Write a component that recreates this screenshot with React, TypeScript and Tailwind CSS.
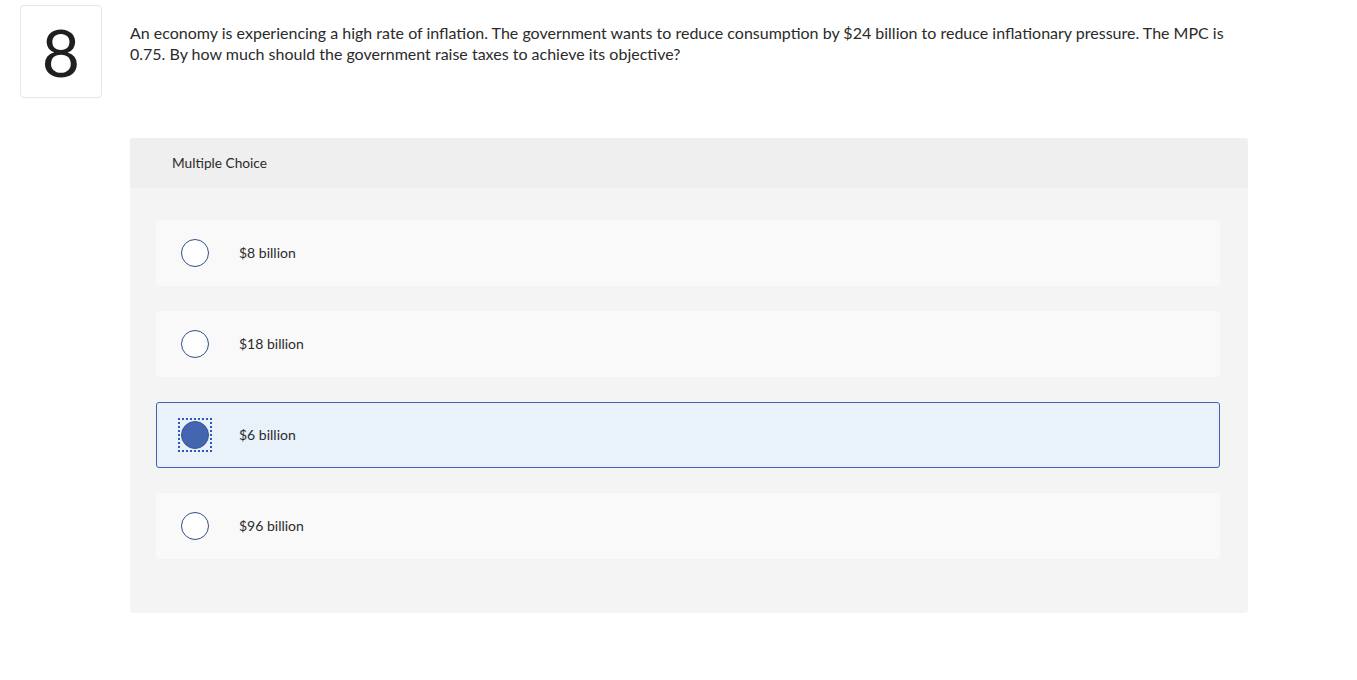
import React from 'react';

const options = [
  { id: 'a', label: '$8 billion' },
  { id: 'b', label: '$18 billion' },
  { id: 'c', label: '$6 billion' },
  { id: 'd', label: '$96 billion' },
];

export default function App() {
  const selected = 'c';

  return (
    <div className="min-h-[680px] bg-white text-[#2b2b2b]" style={{ fontFamily: 'Lato, "Open Sans", sans-serif' }}>
      <div className="flex items-start pt-[5px]">
        {/* Question number */}
        <div className="ml-[20px] flex h-[93px] w-[82px] shrink-0 items-center justify-center rounded-[4px] border border-[#e6e6e6]">
          <span className="text-[66px] leading-none text-[#1f1f1f]">8</span>
        </div>

        <p className="ml-[28px] mt-[17px] w-[1110px] text-[16px] leading-[21px]">
          An economy is experiencing a high rate of inflation. The government wants to reduce consumption by $24 billion to reduce inflationary pressure. The MPC is 0.75. By how much should the government raise taxes to achieve its objective?
        </p>
      </div>

      {/* Answer panel */}
      <div className="ml-[130px] mt-[40px] w-[1118px] overflow-hidden rounded-[3px] bg-[#f4f4f4]">
        <div className="flex h-[50px] items-center bg-[#efefef] pl-[42px] pt-[1px] text-[13.7px]">
          Multiple Choice
        </div>

        <div className="flex flex-col gap-[25px] pb-[54px] pl-[26px] pr-[28px] pt-[32px]">
          {options.map((opt) => {
            const isSel = opt.id === selected;
            return (
              <div
                key={opt.id}
                className={
                  isSel
                    ? 'flex h-[66px] items-center rounded-[3px] border border-[#3f63ad] bg-[#e9f1fb] pl-[23px]'
                    : 'flex h-[66px] items-center rounded-[3px] border border-[#f9f9f9] bg-[#f9f9f9] pl-[23px]'
                }
              >
                <span
                  className={
                    isSel
                      ? 'flex p-[1px] outline-2 outline-dotted outline-[#2c58b8]'
                      : 'flex p-[1px]'
                  }
                >
                  {isSel ? (
                    <span className="h-[28px] w-[28px] rounded-full border-[1.5px] border-[#33569c] bg-[#4466b0]" />
                  ) : (
                    <span className="h-[28px] w-[28px] rounded-full border-[1.5px] border-[#2f4f88] bg-white" />
                  )}
                </span>
                <span className="ml-[29px] pb-[1px] text-[14px]">{opt.label}</span>
              </div>
            );
          })}
        </div>
      </div>
    </div>
  );
}
